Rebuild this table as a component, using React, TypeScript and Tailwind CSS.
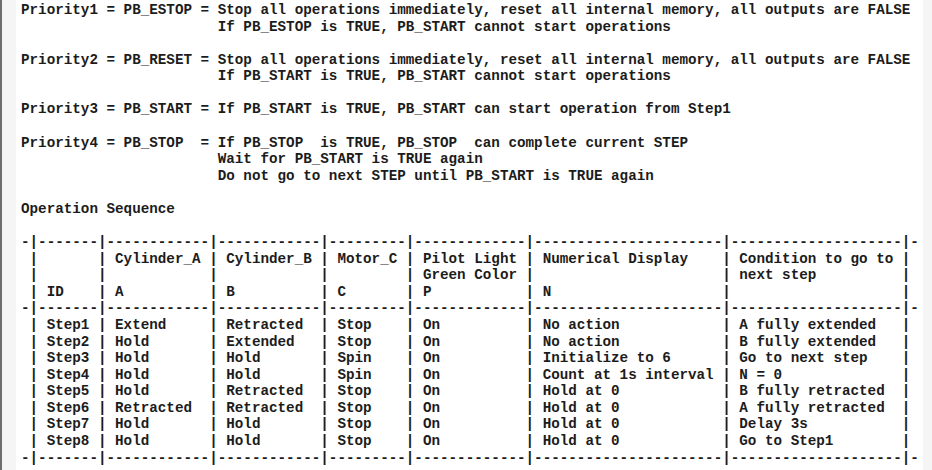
import React from 'react';

const DASH = '-|-------|------------|------------|---------|-------------|----------------------|--------------------|-';

const HEADER = [
  ' |       | Cylinder_A | Cylinder_B | Motor_C | Pilot Light | Numerical Display    | Condition to go to |',
  ' |       |            |            |         | Green Color |                      | next step          |',
  ' | ID    | A          | B          | C       | P           | N                    |                    |',
];

const steps: string[][] = [
  ['Step1', 'Extend', 'Retracted', 'Stop', 'On', 'No action', 'A fully extended'],
  ['Step2', 'Hold', 'Extended', 'Stop', 'On', 'No action', 'B fully extended'],
  ['Step3', 'Hold', 'Hold', 'Spin', 'On', 'Initialize to 6', 'Go to next step'],
  ['Step4', 'Hold', 'Hold', 'Spin', 'On', 'Count at 1s interval', 'N = 0'],
  ['Step5', 'Hold', 'Retracted', 'Stop', 'On', 'Hold at 0', 'B fully retracted'],
  ['Step6', 'Retracted', 'Retracted', 'Stop', 'On', 'Hold at 0', 'A fully retracted'],
  ['Step7', 'Hold', 'Hold', 'Stop', 'On', 'Hold at 0', 'Delay 3s'],
  ['Step8', 'Hold', 'Hold', 'Stop', 'On', 'Hold at 0', 'Go to Step1'],
];

// inner widths of each column, without the separating bars
const widths = [5, 10, 10, 7, 11, 20, 18];

const row = (cells: string[]) =>
  ' | ' + cells.map((c, i) => c.padEnd(widths[i], ' ')).join(' | ') + ' |';

const lines = [
  'Priority1 = PB_ESTOP = Stop all operations immediately, reset all internal memory, all outputs are FALSE',
  '                       If PB_ESTOP is TRUE, PB_START cannot start operations',
  '',
  'Priority2 = PB_RESET = Stop all operations immediately, reset all internal memory, all outputs are FALSE',
  '                       If PB_START is TRUE, PB_START cannot start operations',
  '',
  'Priority3 = PB_START = If PB_START is TRUE, PB_START can start operation from Step1',
  '',
  'Priority4 = PB_STOP  = If PB_STOP  is TRUE, PB_STOP  can complete current STEP',
  '                       Wait for PB_START is TRUE again',
  '                       Do not go to next STEP until PB_START is TRUE again',
  '',
  'Operation Sequence',
  '',
  DASH,
  ...HEADER,
  DASH,
  ...steps.map(row),
  DASH,
];

export default function App() {
  return (
    <div className="flex h-[470px] w-[932px] overflow-hidden bg-white">
      {/* gutter on the left */}
      <div className="w-[2px] shrink-0 bg-[#6e6e6e]" />
      <div className="w-[14px] shrink-0 bg-[#f5f5f5]" />
      <pre className="m-0 flex-1 pl-[5px] pt-[2px] font-['Liberation_Mono',monospace] text-[14.25px] leading-[16.58px] font-bold text-[#1c1c1c]">
        {lines.join('\n')}
      </pre>
      <div className="w-[9px] shrink-0 bg-[#f5f5f5]" />
    </div>
  );
}
